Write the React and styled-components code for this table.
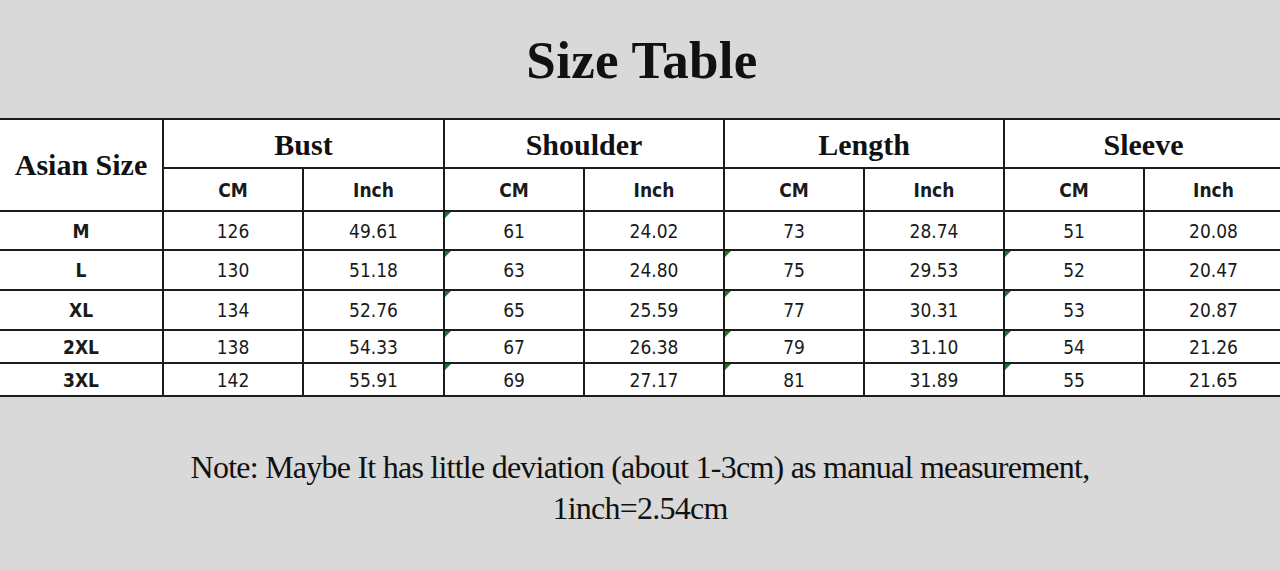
import React from "react";
import styled, { createGlobalStyle } from "styled-components";

const Global = createGlobalStyle`
  html, body { margin: 0; padding: 0; background: #d9d9d9; }
  body { width: 1280px; height: 569px; overflow: hidden; }
`;

const Page = styled.div`
  width: 1280px;
  height: 569px;
  background: #d9d9d9;
  display: flex;
  flex-direction: column;
`;

const TitleBar = styled.div`
  height: 118px;
  display: flex;
  align-items: center;
  justify-content: center;
  padding-left: 4px;
  padding-top: 2px;
  box-sizing: border-box;
`;

const Title = styled.h1`
  margin: 0;
  font-family: "Liberation Serif", "Times New Roman", serif;
  font-weight: 700;
  font-size: 53px;
  color: #111;
  letter-spacing: 0.3px;
`;

const Table = styled.table`
  width: 1284px;
  margin-left: -2px;
  border-collapse: collapse;
  table-layout: fixed;
  background: #fff;
`;

const Cell = styled.td`
  position: relative;
  border: 2px solid #1c1c1c;
  padding: 0;
  text-align: center;
  vertical-align: middle;
  color: #1a1a1a;
  height: ${(p) => p.$h}px;
  box-sizing: border-box;
  font-family: "DejaVu Sans Condensed", "DejaVu Sans", sans-serif;
  font-stretch: condensed;
  font-size: 19px;
  font-weight: ${(p) => (p.$bold ? 700 : 400)};
`;

const GroupHead = styled.th`
  border: 2px solid #1c1c1c;
  padding: 0;
  text-align: center;
  vertical-align: middle;
  font-family: "Liberation Serif", "Times New Roman", serif;
  font-weight: 700;
  font-size: 30px;
  color: #111;
  height: ${(p) => p.$h}px;
  padding-top: ${(p) => p.$pt || 0}px;
  box-sizing: border-box;
`;

const Mark = styled.span`
  position: absolute;
  left: 0;
  top: 0;
  width: 0;
  height: 0;
  border-top: 6px solid #1e7a2a;
  border-right: 6px solid transparent;
`;

const Note = styled.div`
  margin-top: 50px;
  text-align: center;
  font-family: "Liberation Serif", "Times New Roman", serif;
  font-size: 32px;
  line-height: 41px;
  color: #111;
  letter-spacing: -0.76px;
`;

const widths = [164, 140, 141, 140, 140, 140, 140, 140, 139];
const groups = ["Bust", "Shoulder", "Length", "Sleeve"];
const rows = [
  { s: "M", h: 39, v: ["126", "49.61", "61", "24.02", "73", "28.74", "51", "20.08"], m: [2] },
  { s: "L", h: 40, v: ["130", "51.18", "63", "24.80", "75", "29.53", "52", "20.47"], m: [2, 4, 6] },
  { s: "XL", h: 40, v: ["134", "52.76", "65", "25.59", "77", "30.31", "53", "20.87"], m: [2, 4, 6] },
  { s: "2XL", h: 33, v: ["138", "54.33", "67", "26.38", "79", "31.10", "54", "21.26"], m: [2, 4, 6] },
  { s: "3XL", h: 33, v: ["142", "55.91", "69", "27.17", "81", "31.89", "55", "21.65"], m: [2, 4, 6] },
];

export default function App() {
  return (
    <>
      <Global />
      <Page>
        <TitleBar>
          <Title>Size Table</Title>
        </TitleBar>
        <Table>
          <colgroup>
            {widths.map((w, i) => (
              <col key={i} style={{ width: w }} />
            ))}
          </colgroup>
          <thead>
            <tr>
              <GroupHead rowSpan={2} $h={49}>Asian Size</GroupHead>
              {groups.map((g) => (
                <GroupHead key={g} colSpan={2} $h={49} $pt={2}>
                  {g}
                </GroupHead>
              ))}
            </tr>
            <tr>
              {groups.map((g) => (
                <React.Fragment key={g}>
                  <Cell as="th" $bold $h={43}>CM</Cell>
                  <Cell as="th" $bold $h={43}>Inch</Cell>
                </React.Fragment>
              ))}
            </tr>
          </thead>
          <tbody>
            {rows.map((r) => (
              <tr key={r.s}>
                <Cell $bold $h={r.h}>{r.s}</Cell>
                {r.v.map((v, i) => (
                  <Cell key={i} $h={r.h}>
                    {r.m.includes(i) && <Mark />}
                    {v}
                  </Cell>
                ))}
              </tr>
            ))}
          </tbody>
        </Table>
        <Note>
          Note: Maybe It has little deviation (about 1-3cm) as manual measurement,
          <br />
          1inch=2.54cm
        </Note>
      </Page>
    </>
  );
}
